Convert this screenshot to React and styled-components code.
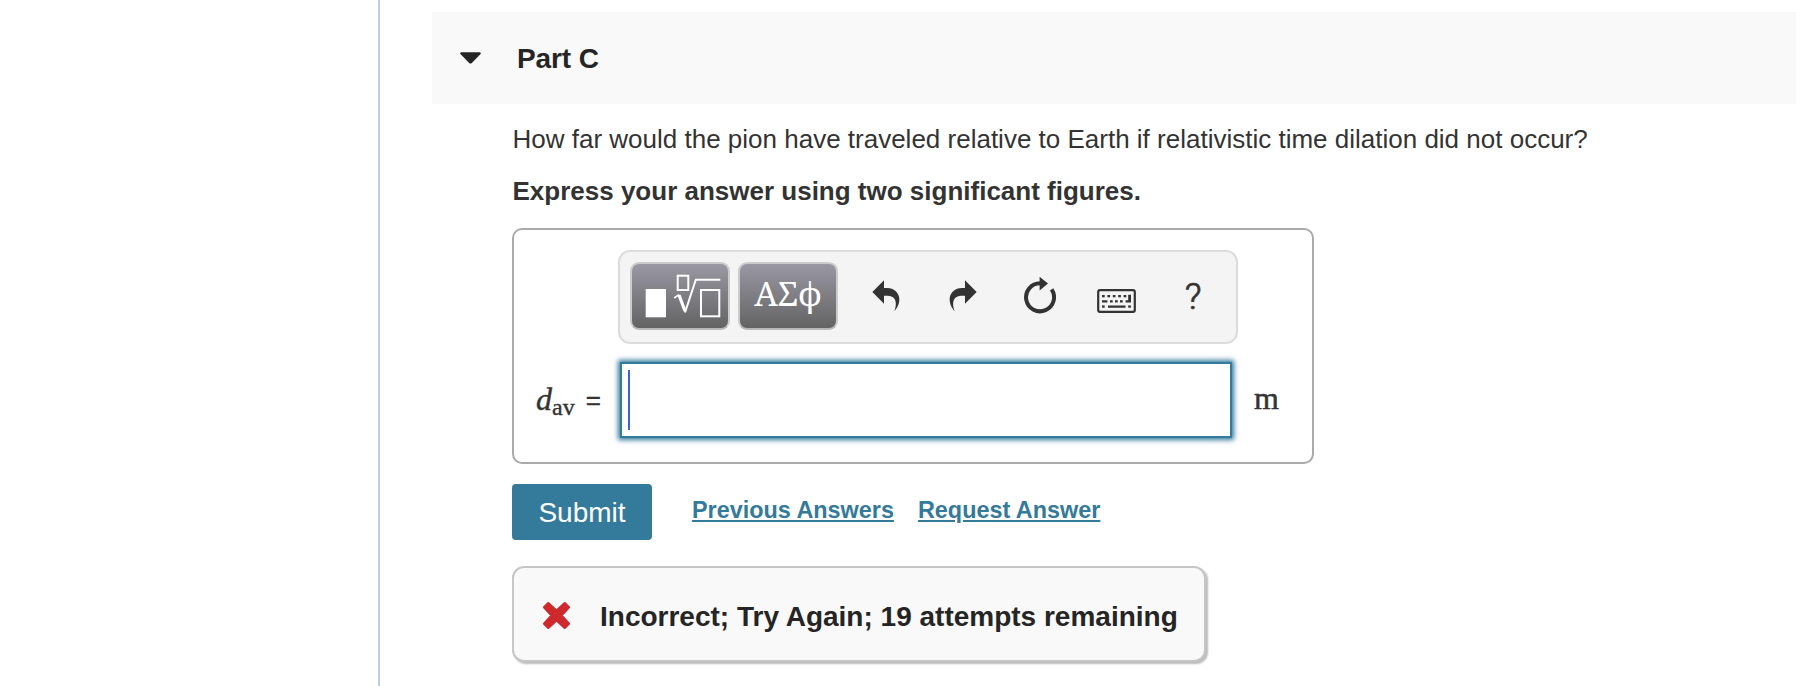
import React from 'react';
import styled, { createGlobalStyle } from 'styled-components';

const GlobalStyle = createGlobalStyle`
  * {
    box-sizing: border-box;
  }
  body {
    margin: 0;
    background: #fff;
    color: #333;
    font-family: 'Liberation Sans', Arial, sans-serif;
  }
`;

const Page = styled.div`
  display: flex;
  height: 686px;
  overflow: hidden;
`;

const Sidebar = styled.aside`
  width: 380px;
  flex-shrink: 0;
  border-right: 2px solid #becae0;
`;

const Main = styled.main`
  flex: 1;
  padding: 12px 0 0 52px;
`;

const PartHeader = styled.header`
  display: flex;
  align-items: center;
  height: 92px;
  padding-left: 28px;
  background: #f9f9f9;
  color: #252525;
`;

const PartTitle = styled.h2`
  margin: 2px 0 0 36px;
  font-size: 28px;
  line-height: 32px;
  letter-spacing: -0.1px;
`;

const Content = styled.section`
  padding: 15px 0 0 80px;
`;

const Question = styled.p`
  margin: 0;
  padding-left: 0.5px;
  font-size: 26px;
  line-height: 40px;
  white-space: nowrap;
`;

const Instruction = styled(Question)`
  margin: 12px 0 17px;
  font-weight: bold;
`;

const AnswerBox = styled.div`
  width: 802px;
  height: 236px;
  padding: 20px 0 0 22px;
  border: 2px solid #aaa;
  border-radius: 10px;
`;

const Toolbar = styled.div`
  display: flex;
  align-items: center;
  width: 620px;
  height: 94px;
  margin-left: 82px;
  padding: 0 4px 2px 10px;
  background: #f4f4f4;
  border: 2px solid #dcdcdc;
  border-radius: 12px;
`;

const PaletteButton = styled.button`
  display: flex;
  align-items: center;
  justify-content: center;
  width: 100px;
  height: 68px;
  margin-right: ${props => (props.$last ? '10px' : '8px')};
  padding: ${props => (props.$last ? '0' : '0 0 1px 6px')};
  border: 2px solid #ccc;
  border-bottom-color: #b9b9b9;
  border-radius: 9px;
  background: linear-gradient(#9a98a3, #636363);
  color: #fff;
`;

const Greek = styled.span`
  font-family: 'Noto Serif', 'Liberation Serif', serif;
  font-size: 33.5px;
  line-height: 40px;
  margin-top: -6px;
`;

const ToolButton = styled.button`
  display: flex;
  align-items: center;
  justify-content: center;
  width: 76.7px;
  height: 68px;
  padding: ${props => props.$top || 0}px 0 ${props => props.$bottom || 0}px;
  border: 0;
  background: none;
  color: #333;
  font-family: Roboto, sans-serif;
  font-size: 37px;
  font-weight: 300;
  -webkit-text-stroke: 0.7px #333;
`;

const AnswerRow = styled.div`
  display: flex;
  align-items: center;
  height: 76px;
  margin-top: 18px;
`;

const Variable = styled.label`
  display: flex;
  align-items: baseline;
  width: 84px;
  font-family: 'Liberation Serif', serif;
  font-size: 32px;
  line-height: 40px;
  -webkit-text-stroke: 0.4px #333;
`;

const Sub = styled.span`
  position: relative;
  top: 5px;
  font-size: 24px;
`;

const Equals = styled.span`
  position: relative;
  top: -1px;
  margin-left: 11px;
  font-family: 'Liberation Sans', sans-serif;
  font-size: 26px;
  line-height: 30px;
`;

const AnswerField = styled.div`
  width: 612px;
  height: 76px;
  padding: 6px;
  border: 2px solid #347a9a;
  box-shadow: 0 0 5px 2px #347a9a;
`;

const Caret = styled.div`
  width: 2px;
  height: 60px;
  background: #3b62cf;
`;

const Unit = styled.span`
  margin: 0 0 4px 22px;
  font-family: 'Liberation Serif', serif;
  font-size: 32px;
  line-height: 36px;
  -webkit-text-stroke: 0.5px #333;
`;

const Actions = styled.div`
  display: flex;
  height: 56px;
  margin-top: 20px;
`;

const Submit = styled.button`
  width: 140px;
  height: 56px;
  margin-right: 40px;
  padding: 1px 0 0;
  border: 0;
  border-radius: 4px;
  background: #347a9a;
  color: #fff;
  font-family: inherit;
  font-size: 28px;
`;

const ActionLink = styled.a`
  margin: 11px 24px 0 0;
  color: #347a9a;
  font-size: 23.4px;
  font-weight: bold;
  line-height: 30px;
  text-decoration: underline;
  text-decoration-thickness: 2px;
  text-underline-offset: 2px;
`;

const Feedback = styled.div`
  display: flex;
  align-items: center;
  width: 694px;
  height: 96px;
  margin-top: 26px;
  padding: 2px 0 0 29px;
  border: 2px solid #c6c6c6;
  border-radius: 12px;
  background: #f9f9f9;
  box-shadow: 2px 2px 2px #bbb;
  color: #252525;
  font-size: 28px;
  font-weight: bold;
  white-space: nowrap;
`;

const FeedbackText = styled.span`
  margin: 3px 0 0 30px;
`;

const TriangleIcon = () => (
  <svg width="21" height="12" viewBox="0 0 21 12">
    <path d="M1 .2H20Q21.4 1 20.3 2.3L11.6 11.2Q10.5 12 9.4 11.2L.7 2.3Q-.4 1 1 .2Z" fill="#252525" />
  </svg>
);

const RootIcon = () => (
  <svg width="76" height="44" viewBox="0 0 76 44" fill="none" stroke="#fff">
    <rect x=".7" y="15" width="20.3" height="28.3" fill="#fff" stroke="none" />
    <rect x="32.7" y="1.7" width="10.6" height="14.3" strokeWidth="2" />
    <path d="M29.2 24L34 20.7" strokeWidth="1.6" />
    <path d="M34 21L40 37" strokeWidth="3.2" />
    <path d="M40 38.5L50.8 5.7H75.3" strokeWidth="2" />
    <rect x="56" y="16" width="18.3" height="26.3" strokeWidth="2" />
  </svg>
);

const UndoIcon = () => (
  <svg width="28" height="32" viewBox="0 0 84 96">
    <path d="M1 36L36 1V24H45C70 24 82 42 82 58C82 74 75 84 67 94C76 70 73 48 48 47H36V71Z" fill="#333" />
  </svg>
);

const RedoIcon = () => (
  <svg width="28" height="32" viewBox="0 0 84 96">
    <path d="M83 36L48 1V24H39C14 24 2 42 2 58C2 74 9 84 17 94C8 70 11 48 36 47H48V71Z" fill="#333" />
  </svg>
);

const ResetIcon = () => (
  <svg width="32" height="38" viewBox="0 0 32 38">
    <path d="M16 7.3A14 14 0 1 0 27.6 13.4" fill="none" stroke="#333" strokeWidth="4" />
    <path d="M15.6 .8L24 7.6L15.6 14.6Z" fill="#333" />
  </svg>
);

const keys = [
  [5, 6], [10.4, 6], [15.8, 6], [21.2, 6], [26.6, 6],
  [13, 11.2], [18, 11.2], [23, 11.2],
  [5, 16.4], [31.2, 16.4],
];

const KeyboardIcon = () => (
  <svg width="39" height="24" viewBox="0 0 39 24" fill="#333">
    <rect x="1.2" y="1.2" width="36.6" height="21.6" rx="1.8" fill="none" stroke="#333" strokeWidth="2.2" />
    {keys.map(([x, y]) => (
      <rect key={`${x}-${y}`} x={x} y={y} width="2.7" height="2.3" />
    ))}
    <path d="M5 11.2h5.4v2.3H5zM31.2 5.8H34v7.7h-5.4v-2.3h2.6zM11 16.4h17.5v2.3H11z" />
  </svg>
);

const CrossIcon = () => (
  <svg width="27" height="27" viewBox="0 0 27 27">
    <path
      d="M5.3 1.5L13.5 9L21.7 1.5L25.5 5.3L18 13.5L25.5 21.7L21.7 25.5L13.5 18L5.3 25.5L1.5 21.7L9 13.5L1.5 5.3Z"
      fill="#ce2a2d"
      stroke="#ce2a2d"
      strokeWidth="3"
      strokeLinejoin="round"
    />
  </svg>
);

export default function App() {
  return (
    <Page>
      <GlobalStyle />
      <Sidebar />
      <Main>
        <PartHeader>
          <TriangleIcon />
          <PartTitle>Part C</PartTitle>
        </PartHeader>
        <Content>
          <Question>
            How far would the pion have traveled relative to Earth if relativistic time dilation did not occur?
          </Question>
          <Instruction>Express your answer using two significant figures.</Instruction>
          <AnswerBox>
            <Toolbar>
              <PaletteButton><RootIcon /></PaletteButton>
              <PaletteButton $last><Greek>ΑΣϕ</Greek></PaletteButton>
              <ToolButton><UndoIcon /></ToolButton>
              <ToolButton><RedoIcon /></ToolButton>
              <ToolButton $bottom={2}><ResetIcon /></ToolButton>
              <ToolButton $top={9}><KeyboardIcon /></ToolButton>
              <ToolButton>?</ToolButton>
            </Toolbar>
            <AnswerRow>
              <Variable>
                <i>d</i>
                <Sub>av</Sub>
                <Equals>=</Equals>
              </Variable>
              <AnswerField>
                <Caret />
              </AnswerField>
              <Unit>m</Unit>
            </AnswerRow>
          </AnswerBox>
          <Actions>
            <Submit>Submit</Submit>
            <ActionLink>Previous Answers</ActionLink>
            <ActionLink>Request Answer</ActionLink>
          </Actions>
          <Feedback>
            <CrossIcon />
            <FeedbackText>Incorrect; Try Again; 19 attempts remaining</FeedbackText>
          </Feedback>
        </Content>
      </Main>
    </Page>
  );
}
